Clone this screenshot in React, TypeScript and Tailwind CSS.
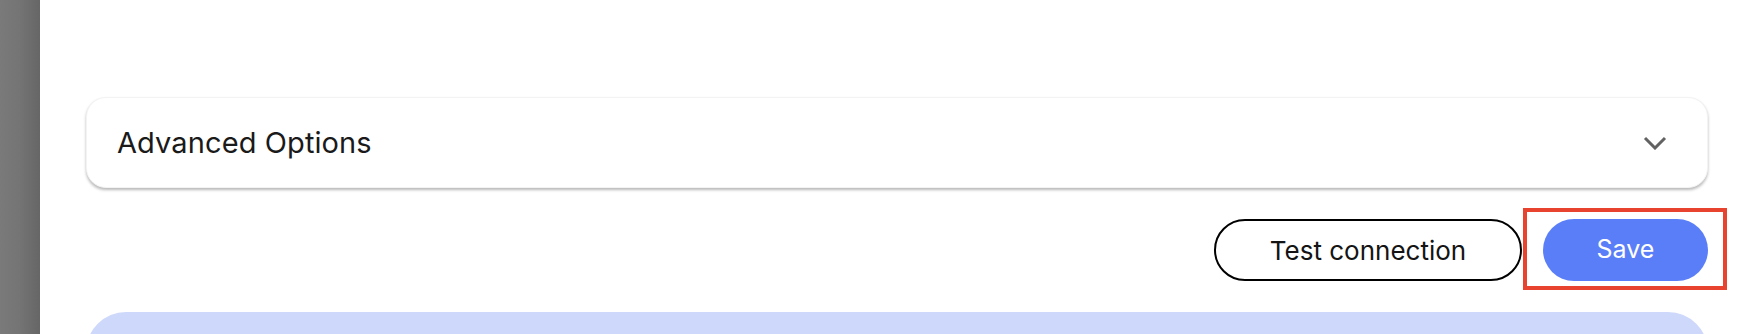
export default function App() {
  return (
    <div
      className="flex h-[334px] w-full overflow-hidden bg-white"
      style={{ fontFamily: 'Inter, "Noto Sans", sans-serif' }}
    >
      {/* side strip */}
      <div className="w-[40px] shrink-0 bg-gradient-to-r from-[#7a7a7a] via-[#747474] to-[#666666]" />

      <div className="flex flex-1 flex-col pl-[46px] pr-[38px] pt-[97px]">
        {/* Advanced options accordion */}
        <div className="flex h-[91px] shrink-0 items-center justify-between rounded-[20px] border border-[#f3f3f3] bg-white pl-[30px] pr-[40px] shadow-[0_2px_3px_rgba(0,0,0,0.28)]">
          <span className="text-[29px] font-normal tracking-[0.1px] text-[#1a1a1a]">Advanced Options</span>
          <svg width="24" height="14" viewBox="0 0 24 14" fill="none">
            <path d="M2 2l10 10L22 2" stroke="#626262" strokeWidth="3" />
          </svg>
        </div>

        {/* actions */}
        <div className="mt-[31px] flex shrink-0 justify-end gap-[21px]">
          <button className="h-[62px] w-[308px] rounded-full border-2 border-black bg-white text-[26px] text-[#141414]">
            Test connection
          </button>
          <div className="relative">
            <button className="h-[62px] w-[165px] rounded-full bg-[#5a7ef7] text-[25px] text-white">
              Save
            </button>
            <div className="pointer-events-none absolute -bottom-[9px] -left-[20px] -right-[19px] -top-[11px] border-[4px] border-[#e8432f]" />
          </div>
        </div>

        {/* next panel */}
        <div className="mt-[31px] h-[200px] shrink-0 rounded-t-[40px] bg-[#cdd8fb]" />
      </div>
    </div>
  )
}
